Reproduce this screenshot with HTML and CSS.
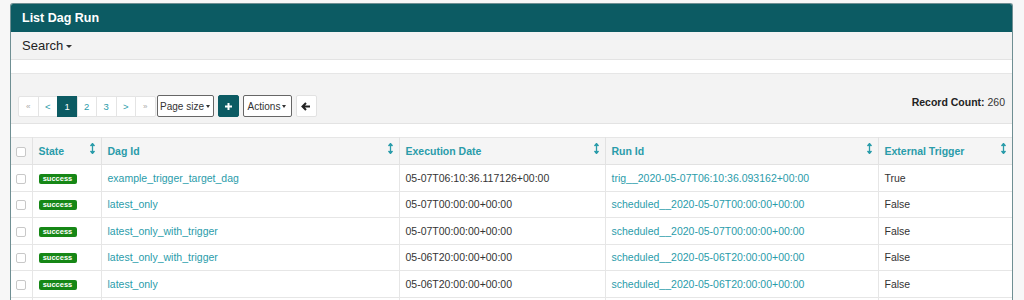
FILE: index.html
```html
<!DOCTYPE html>
<html>
<head>
<meta charset="utf-8">
<link rel="stylesheet" href="styles.css">
</head>
<body>
<div class="panel">
  <div class="panel-heading">List Dag Run</div>
  <div class="search-bar">Search<span class="caret"></span></div>
  <div class="strip"></div>
  <div class="toolbar">
    <div class="tools">
      <ul class="pager">
        <li class="muted">&laquo;</li>
        <li>&lt;</li>
        <li class="active">1</li>
        <li>2</li>
        <li>3</li>
        <li>&gt;</li>
        <li class="muted">&raquo;</li>
      </ul>
      <button class="btn btn-outline btn-size">Page size<span class="caret small"></span></button>
      <button class="btn btn-primary"><svg width="9" height="9" viewBox="0 0 9 9"><path d="M4.5 1v7M1 4.5h7" stroke="#fff" stroke-width="2"/></svg></button>
      <button class="btn btn-outline btn-actions">Actions<span class="caret small"></span></button>
      <button class="btn btn-light"><svg width="10" height="9" viewBox="0 0 10 9"><path d="M9 4.5H2.5M5 1 1.5 4.5 5 8" stroke="#222" stroke-width="2" fill="none"/></svg></button>
    </div>
    <div class="count"><b>Record Count:</b> 260</div>
  </div>
  <div class="strip"></div>
  <table class="grid">
    <colgroup>
      <col class="c-chk"><col class="c-state"><col class="c-dag"><col class="c-exec"><col class="c-run"><col class="c-ext">
    </colgroup>
    <thead>
      <tr>
        <th><span class="cb"></span></th>
        <th><div class="th">State<svg class="sort" viewBox="0 0 5 11"><path d="M2.5 1v9M0.5 3 2.5 0.5 4.5 3M0.5 8 2.5 10.5 4.5 8" stroke="#2a9caa" stroke-width="1.3" fill="#2a9caa"/></svg></div></th>
        <th><div class="th">Dag Id<svg class="sort" viewBox="0 0 5 11"><path d="M2.5 1v9M0.5 3 2.5 0.5 4.5 3M0.5 8 2.5 10.5 4.5 8" stroke="#2a9caa" stroke-width="1.3" fill="#2a9caa"/></svg></div></th>
        <th><div class="th">Execution Date<svg class="sort" viewBox="0 0 5 11"><path d="M2.5 1v9M0.5 3 2.5 0.5 4.5 3M0.5 8 2.5 10.5 4.5 8" stroke="#2a9caa" stroke-width="1.3" fill="#2a9caa"/></svg></div></th>
        <th><div class="th">Run Id<svg class="sort" viewBox="0 0 5 11"><path d="M2.5 1v9M0.5 3 2.5 0.5 4.5 3M0.5 8 2.5 10.5 4.5 8" stroke="#2a9caa" stroke-width="1.3" fill="#2a9caa"/></svg></div></th>
        <th><div class="th">External Trigger<svg class="sort" viewBox="0 0 5 11"><path d="M2.5 1v9M0.5 3 2.5 0.5 4.5 3M0.5 8 2.5 10.5 4.5 8" stroke="#2a9caa" stroke-width="1.3" fill="#2a9caa"/></svg></div></th>
      </tr>
    </thead>
    <tbody>
      <tr><td><span class="cb"></span></td><td><span class="badge">success</span></td><td class="link">example_trigger_target_dag</td><td>05-07T06:10:36.117126+00:00</td><td class="link">trig__2020-05-07T06:10:36.093162+00:00</td><td>True</td></tr>
      <tr><td><span class="cb"></span></td><td><span class="badge">success</span></td><td class="link">latest_only</td><td>05-07T00:00:00+00:00</td><td class="link">scheduled__2020-05-07T00:00:00+00:00</td><td>False</td></tr>
      <tr><td><span class="cb"></span></td><td><span class="badge">success</span></td><td class="link">latest_only_with_trigger</td><td>05-07T00:00:00+00:00</td><td class="link">scheduled__2020-05-07T00:00:00+00:00</td><td>False</td></tr>
      <tr><td><span class="cb"></span></td><td><span class="badge">success</span></td><td class="link">latest_only_with_trigger</td><td>05-06T20:00:00+00:00</td><td class="link">scheduled__2020-05-06T20:00:00+00:00</td><td>False</td></tr>
      <tr><td><span class="cb"></span></td><td><span class="badge">success</span></td><td class="link">latest_only</td><td>05-06T20:00:00+00:00</td><td class="link">scheduled__2020-05-06T20:00:00+00:00</td><td>False</td></tr>
      <tr class="next"><td></td><td></td><td></td><td></td><td></td><td></td></tr>
    </tbody>
  </table>
</div>
</body>
</html>
```
FILE: styles.css
```css
html, body {
  margin: 0;
  padding: 0;
  background: #f7f7f7;
  font-family: "Liberation Sans", Arial, Helvetica, sans-serif;
  color: #333;
}
.panel {
  margin: 3px 0 0 10px;
  width: 1001px;
  border: 1px solid #6f8f93;
  border-bottom: none;
  border-radius: 3px 3px 0 0;
  background: #fff;
  overflow: hidden;
}
.panel-heading {
  height: 28px;
  line-height: 28px;
  padding-left: 11px;
  background: #0c5b63;
  color: #fff;
  font-weight: bold;
  font-size: 12.5px;
}
.search-bar {
  height: 27px;
  line-height: 28px;
  padding-left: 11px;
  background: #f3f3f3;
  border-bottom: 1px solid #e3e3e3;
  font-size: 13px;
  color: #222;
}
.caret {
  display: inline-block;
  width: 0;
  height: 0;
  margin-left: 3px;
  vertical-align: middle;
  border-top: 3px solid #333;
  border-left: 3px solid transparent;
  border-right: 3px solid transparent;
}
.caret.small {
  margin-left: 2px;
  border-top-width: 3px;
  border-left-width: 2.5px;
  border-right-width: 2.5px;
}
.strip {
  height: 13px;
  background: #fff;
}
.toolbar {
  display: flex;
  align-items: flex-start;
  justify-content: space-between;
  height: 49px;
  background: #f3f3f3;
  border-top: 1px solid #e6e6e6;
  border-bottom: 1px solid #e3e3e3;
}
.tools {
  display: flex;
  align-items: center;
  margin: 21px 0 0 7px;
}
.pager {
  display: flex;
  list-style: none;
  margin: 0 1px 0 0;
  padding: 0;
}
.pager li {
  width: 18.5px;
  height: 19px;
  line-height: 19px;
  text-align: center;
  font-size: 9.5px;
  color: #2a9caa;
  background: #fff;
  border: 1px solid #e4e4e4;
  margin-left: -1px;
}
.pager li:first-child {
  margin-left: 0;
  border-radius: 2px 0 0 2px;
}
.pager li:last-child {
  border-radius: 0 2px 2px 0;
}
.pager li.muted {
  color: #aaa;
  font-size: 8px;
}
.pager li.active {
  background: #0c5b63;
  border-color: #0c5b63;
  color: #fff;
}
.btn {
  height: 22px;
  padding: 0;
  margin-right: 4px;
  font-family: inherit;
  font-size: 10px;
  color: #333;
  border-radius: 2px;
  display: flex;
  align-items: center;
  justify-content: center;
  cursor: pointer;
}
.btn-outline {
  background: #fff;
  border: 1px solid #666;
}
.btn-size { width: 57px; }
.btn-actions { width: 49px; }
.btn-primary {
  width: 21px;
  background: #0c5b63;
  border: 1px solid #0c5b63;
}
.btn-light {
  width: 21px;
  background: #fff;
  border: 1px solid #e2e2e2;
}
.count {
  margin: 22px 7px 0 0;
  font-size: 10.5px;
  color: #333;
}
.count b {
  color: #222;
}
.grid {
  width: 1001px;
  border-collapse: collapse;
  table-layout: fixed;
  font-size: 10.5px;
}
.c-chk { width: 21px; }
.c-state { width: 69px; }
.c-dag { width: 298px; }
.c-exec { width: 206px; }
.c-run { width: 273px; }
.c-ext { width: 134px; }
.grid th {
  height: 26px;
  background: #f5f5f5;
  border: 1px solid #e2e2e2;
  border-top: 1px solid #e6e6e6;
  text-align: left;
  padding: 0 6px;
  color: #2a9caa;
  font-weight: bold;
  font-size: 10.5px;
}
.grid th:first-child, .grid td:first-child {
  border-left: none;
  padding: 0;
  text-align: center;
}
.grid th:last-child, .grid td:last-child {
  border-right: none;
}
.th {
  display: flex;
  align-items: center;
  justify-content: space-between;
}
.sort {
  width: 5px;
  height: 11px;
  margin-top: -5px;
}
.grid td {
  height: 25.5px;
  border: 1px solid #e6e6e6;
  padding: 0 6px;
  color: #333;
  white-space: nowrap;
}
.grid td.link {
  color: #2a9caa;
}
.cb {
  display: inline-block;
  width: 8px;
  height: 8px;
  border: 1px solid #c8c8c8;
  border-radius: 2px;
  background: #fff;
  vertical-align: middle;
}
.badge {
  display: inline-block;
  width: 38px;
  height: 10px;
  line-height: 10px;
  text-align: center;
  background: #168716;
  color: #fff;
  font-size: 7.5px;
  font-weight: bold;
  border-radius: 2px;
  vertical-align: middle;
}
```
